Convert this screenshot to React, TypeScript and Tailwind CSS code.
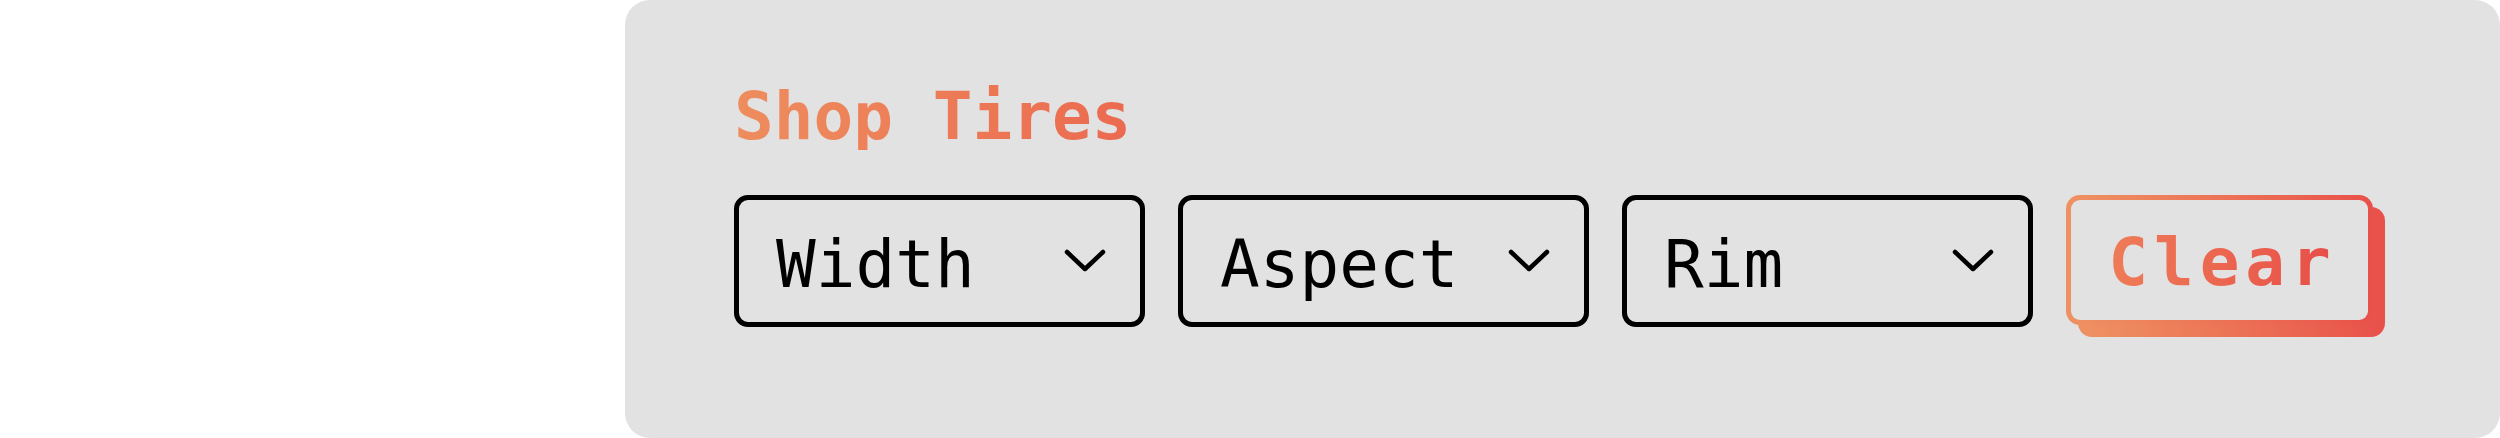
import React from "react";

const mono = "font-['DejaVu_Sans_Mono','Liberation_Mono',monospace]";

const Chevron = () => (
  <svg width="42" height="24" viewBox="0 0 42 24" fill="none" className="shrink-0">
    <path d="M3 3L21 20L39 3" stroke="#000" strokeWidth="4.5" strokeLinecap="round" strokeLinejoin="round" />
  </svg>
);

const SelectBox = ({ label }: { label: string }) => (
  <div className="flex h-[132px] w-[411px] items-center justify-between rounded-[14px] border-[5px] border-black pl-[37px] pr-[34px]">
    <span className={`${mono} pt-[8px] text-[66px] leading-none text-black`}>{label}</span>
    <Chevron />
  </div>
);

const ClearButton = () => (
  <div className="relative h-[130px] w-[307px]">
    {/* offset block behind the button */}
    <div className="absolute left-[12px] top-[12px] h-full w-full rounded-[14px] bg-linear-to-r from-[#ee9262] to-[#e8504a]" />
    <div className="relative h-full w-full rounded-[14px] bg-linear-to-r from-[#ee9262] to-[#e8504a] p-[5px]">
      <div className="flex h-full w-full items-center justify-center rounded-[9px] bg-[#e2e2e2]">
        <span
          className={`${mono} bg-linear-to-r from-[#ee7d58] to-[#e84c48] bg-clip-text pl-[6px] pt-[6px] text-[66px] font-bold leading-none tracking-[6px] text-transparent`}
        >
          Clear
        </span>
      </div>
    </div>
  </div>
);

export default function App() {
  return (
    <div className="h-[438px] w-full bg-white">
      <div className="ml-auto h-[438px] w-3/4 rounded-[25px] bg-[#e2e2e2] pl-[109px] pt-[84px]">
        <h1
          className={`${mono} inline-block bg-linear-to-r from-[#ee8d5e] to-[#eb6a50] bg-clip-text text-[66px] font-bold leading-none text-transparent`}
        >
          Shop Tires
        </h1>
        <div className="mt-[45px] flex items-start gap-[33px]">
          <SelectBox label="Width" />
          <SelectBox label="Aspect" />
          <SelectBox label="Rim" />
          <ClearButton />
        </div>
      </div>
    </div>
  );
}
